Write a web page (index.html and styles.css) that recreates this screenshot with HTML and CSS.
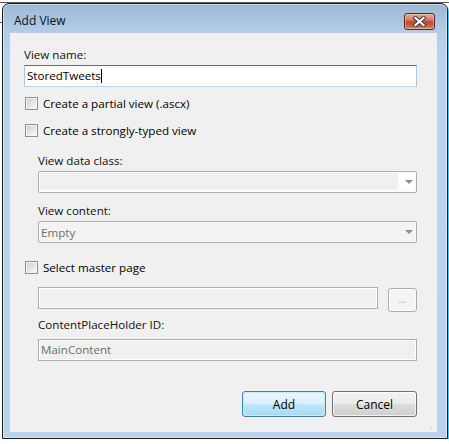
FILE: index.html
```html
<!DOCTYPE html>
<html lang="en">
<head>
  <meta charset="UTF-8" />
  <title>Add View</title>
  <link rel="stylesheet" href="styles.css">
</head>
<body>
  <!-- Dialog window -->
  <div class="window">
    <div class="titlebar">
      <span class="title">Add View</span>
      <button class="close" aria-label="Close">
        <svg width="15" height="11" viewBox="0 0 15 11">
          <path d="M3.5 2 L11.5 9 M11.5 2 L3.5 9" stroke="#3b3b3b" stroke-width="4.2" stroke-linecap="square" fill="none"/>
          <path d="M3.5 2 L11.5 9 M11.5 2 L3.5 9" stroke="#ffffff" stroke-width="2.2" stroke-linecap="square" fill="none"/>
        </svg>
      </button>
    </div>

    <div class="client">
      <div class="label label-name">View name:</div>
      <div class="textbox focused">StoredTweets<span class="caret"></span></div>

      <label class="check check-partial"><span class="box"></span>Create a partial view (.ascx)</label>
      <label class="check check-typed"><span class="box"></span>Create a strongly-typed view</label>

      <div class="group">
        <div class="label label-class">View data class:</div>
        <div class="combo empty">
          <span class="combo-field"></span>
          <span class="arrow"></span>
        </div>

        <div class="label label-content">View content:</div>
        <div class="combo">
          <span class="combo-text">Empty</span>
          <span class="arrow"></span>
        </div>
      </div>

      <label class="check check-master"><span class="box"></span>Select master page</label>

      <div class="group">
        <div class="master-row">
          <div class="textbox disabled"></div>
          <button class="browse" disabled>...</button>
        </div>
        <div class="label label-holder">ContentPlaceHolder ID:</div>
        <div class="textbox disabled">MainContent</div>
      </div>

      <div class="actions">
        <button class="btn btn-default">Add</button>
        <button class="btn">Cancel</button>
      </div>

      <span class="grip"></span>
    </div>
  </div>
</body>
</html>
```

FILE: styles.css
```css
body {
  margin: 0;
  padding-top: 3px;
  font-family: "Open Sans", "Noto Sans", sans-serif;
  font-size: 11.6px;
  color: #000;
  background:
    linear-gradient(#5a5a5a, #5a5a5a) 0 2px / 100% 1px no-repeat,
    linear-gradient(#5a5a5a, #5a5a5a) 0 22px / 3px 1px no-repeat,
    #fff;
}

/* Window frame */
.window {
  width: 446px;
  height: 436px;
  margin-left: 2px;
  box-sizing: border-box;
  padding: 0 10px 6px 7px;
  border: 1px solid #1c1c1c;
  border-radius: 7px 7px 0 0;
  background: linear-gradient(#9db7d5, #b4cce8 28px, #bbd3ed 60px, #bad2ec);
  box-shadow: inset 0 0 0 1px rgba(255, 255, 255, 0.45), 1px 1px 0 #3ccdf0;
  display: flex;
  flex-direction: column;
}

.titlebar {
  height: 29px;
  padding: 9px 2px 0 4px;
  box-sizing: border-box;
  display: flex;
  justify-content: space-between;
  align-items: flex-start;
}

.title {
  line-height: 16px;
  font-size: 12px;
  color: #101010;
}

.close {
  width: 31px;
  height: 17px;
  padding: 0;
  border: 1px solid #5b2620;
  border-radius: 3px;
  background: linear-gradient(#e9ab9b 0, #d67a64 40%, #c14a33 50%, #c9543b 75%, #dc8b74 100%);
  box-shadow: inset 0 0 0 1px rgba(255, 220, 210, 0.45);
  display: flex;
  align-items: center;
  justify-content: center;
}

/* Client area */
.client {
  flex: 1;
  background: #f0f0f0;
  padding: 14px 20px 0 14px;
  display: flex;
  flex-direction: column;
  position: relative;
}

.label {
  line-height: 16px;
  height: 16px;
  color: #111;
}

.label-name { margin-bottom: 2px; }
.label-class { margin-top: 15px; margin-bottom: 2px; }
.label-content { margin-top: 10px; margin-bottom: 2px; }
.label-holder { margin-top: 5px; margin-bottom: 6px; }

.textbox {
  height: 22px;
  box-sizing: border-box;
  padding: 0 2px;
  line-height: 20px;
  border: 1px solid #abadb3;
  background: #fff;
}

.textbox.focused {
  border-color: #a4c9e3 #a4c9e3 #b7d9ed;
  border-top-color: #3d7bad;
}

.caret {
  display: inline-block;
  width: 1px;
  height: 14px;
  background: #000;
  vertical-align: -3px;
}

.textbox.disabled {
  border-color: #adadad;
  background: #f0f0f0;
  box-shadow: inset 0 0 0 1px #fff;
  color: #6d6d6d;
}

/* Checkboxes */
.check {
  height: 15px;
  display: flex;
  align-items: center;
  gap: 5px;
  padding-left: 1px;
  line-height: 15px;
}

.check-partial { margin-top: 9px; }
.check-typed { margin-top: 12px; }
.check-master { margin-top: 17px; }

.box {
  width: 13px;
  height: 13px;
  box-sizing: border-box;
  border: 1px solid #8e8f8f;
  background: linear-gradient(135deg, #c9ccd1, #eeeeee 70%, #fafafa);
  box-shadow: inset 0 0 0 1px #f4f4f4;
}

.group {
  padding-left: 14px;
  display: flex;
  flex-direction: column;
}

/* Combo boxes */
.combo {
  height: 22px;
  box-sizing: border-box;
  border: 1px solid #adadad;
  border-radius: 2px;
  background: #f3f3f3;
  box-shadow: inset 0 0 0 1px #fbfbfb;
  display: flex;
  align-items: center;
  padding-right: 3px;
}

.combo.empty {
  background: #fff;
  align-items: stretch;
  padding: 1px 3px 2px 1px;
}

.combo-field {
  flex: 1;
  background: #f0f0f0;
  margin-right: 7px;
}

.combo-text {
  flex: 1;
  padding-left: 2px;
  color: #6d6d6d;
}

.arrow {
  align-self: center;
  width: 0;
  height: 0;
  border-left: 4px solid transparent;
  border-right: 4px solid transparent;
  border-top: 4px solid #8c8c8c;
}

/* Master page row */
.master-row {
  margin-top: 12px;
  display: flex;
  align-items: flex-start;
  gap: 10px;
  height: 25px;
}

.master-row .textbox {
  flex: 1;
}

.browse {
  width: 29px;
  height: 24px;
  margin-top: 1px;
  padding: 0 0 2px;
  border: 1px solid #adadad;
  border-radius: 3px;
  background: #f4f4f4;
  box-shadow: inset 0 0 0 1px #fcfcfc;
  font-family: inherit;
  font-size: 10px;
  color: #a6a6a6;
}

/* Dialog buttons */
.actions {
  margin-top: 30px;
  display: flex;
  justify-content: flex-end;
  gap: 6px;
}

.btn {
  width: 85px;
  height: 26px;
  padding: 0;
  border: 1px solid #707070;
  border-radius: 3px;
  background: linear-gradient(#f2f2f2 0, #ebebeb 50%, #dddddd 50%, #cfcfcf 100%);
  box-shadow: inset 0 0 0 1px rgba(255, 255, 255, 0.7);
  font-family: inherit;
  font-size: 12px;
  color: #000;
}

.btn-default {
  width: 84px;
  border-color: #3c7fb1;
  background: linear-gradient(#eaf6fd 0, #d9f0fc 50%, #bee6fd 50%, #a7d9f5 100%);
  box-shadow: inset 0 0 0 1px #c8ecfd;
}

.grip {
  position: absolute;
  right: 3px;
  bottom: 2px;
  width: 7px;
  height: 7px;
  background:
    radial-gradient(circle, #b7b7b7 0.8px, transparent 1px) 0 0 / 3px 3px;
  clip-path: polygon(100% 0, 100% 100%, 0 100%);
}
```
